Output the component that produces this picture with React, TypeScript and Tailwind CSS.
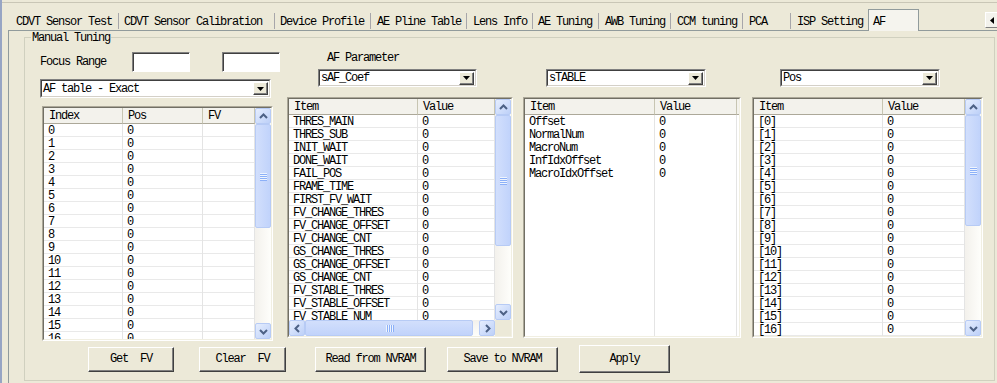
import React from 'react';

type Dir = 'up' | 'down' | 'left' | 'right';

const tabs = [
  { label: 'CDVT Sensor Test', cls: 'w-[109px] pl-[6px] border-r border-r-[#A7A6AA]' },
  { label: 'CDVT Sensor Calibration', cls: 'w-[156px] pl-[5px] border-r border-r-[#A7A6AA]' },
  { label: 'Device Profile', cls: 'w-[96px] pl-[5px] border-r border-r-[#A7A6AA]' },
  { label: 'AE Pline Table', cls: 'w-[96px] pl-[6px] border-r border-r-[#A7A6AA]' },
  { label: 'Lens Info', cls: 'w-[66px] pl-[6px] border-r border-r-[#A7A6AA]' },
  { label: 'AE Tuning', cls: 'w-[66px] pl-[5px] border-r border-r-[#A7A6AA]' },
  { label: 'AWB Tuning', cls: 'w-[72px] pl-[6px] border-r border-r-[#A7A6AA]' },
  { label: 'CCM tuning', cls: 'w-[72px] pl-[6px] border-r border-r-[#A7A6AA]' },
  { label: 'PCA', cls: 'w-[48px] pl-[6px] border-r border-r-[#A7A6AA]' },
  { label: 'ISP Setting', cls: 'w-[77px] pl-[6px]' },
];

const afParams = [
  'THRES_MAIN', 'THRES_SUB', 'INIT_WAIT', 'DONE_WAIT', 'FAIL_POS', 'FRAME_TIME', 'FIRST_FV_WAIT',
  'FV_CHANGE_THRES', 'FV_CHANGE_OFFSET', 'FV_CHANGE_CNT', 'GS_CHANGE_THRES', 'GS_CHANGE_OFFSET',
  'GS_CHANGE_CNT', 'FV_STABLE_THRES', 'FV_STABLE_OFFSET', 'FV_STABLE_NUM',
];
const stable = ['Offset', 'NormalNum', 'MacroNum', 'InfIdxOffset', 'MacroIdxOffset'];
const range = (n: number) => Array.from({ length: n }, (_, i) => i);

const Arrow = ({ dir }: { dir: Dir }) => {
  const d = {
    up: 'M1 6L4.5 2.5L8 6',
    down: 'M1 3L4.5 6.5L8 3',
    left: 'M6 1L2.5 4.5L6 8',
    right: 'M3 1L6.5 4.5L3 8',
  }[dir];
  return (
    <svg width="9" height="9" viewBox="0 0 9 9">
      <path d={d} fill="none" stroke="#4D6185" strokeWidth="2" />
    </svg>
  );
};

const LunaBtn = ({ dir }: { dir: Dir }) => (
  <div className="flex h-[16px] w-[16px] shrink-0 items-center justify-center rounded-[2px] border border-[#B7CBF5] bg-gradient-to-br from-[#E6EEFE] to-[#BDD0F8]">
    <Arrow dir={dir} />
  </div>
);

const Grip = ({ vertical }: { vertical?: boolean }) =>
  vertical ? (
    <div className="flex h-[7px] gap-px">
      {range(4).map((i) => (
        <div key={i} className="h-full w-px bg-[#EEF4FE] shadow-[1px_0_0_#8CB0F8]" />
      ))}
    </div>
  ) : (
    <div className="flex w-[7px] flex-col gap-px">
      {range(4).map((i) => (
        <div key={i} className="h-px w-full bg-[#EEF4FE] shadow-[0_1px_0_#8CB0F8]" />
      ))}
    </div>
  );

const VScroll = ({ thumb }: { thumb: string }) => (
  <div className="flex h-full w-[16px] shrink-0 flex-col bg-gradient-to-r from-[#F3F1EC] to-[#FEFEFB]">
    <LunaBtn dir="up" />
    <div className={'flex w-[16px] items-center justify-center rounded-[2px] border border-[#B7CBF5] bg-gradient-to-r from-[#D2DFFC] to-[#C1D3FB] ' + thumb}>
      <Grip />
    </div>
    <div className="flex-1" />
    <LunaBtn dir="down" />
  </div>
);

const HScroll = () => (
  <div className="flex h-[16px] flex-1 bg-gradient-to-b from-[#F3F1EC] to-[#FEFEFB]">
    <LunaBtn dir="left" />
    <div className="flex h-[16px] w-[168px] items-center justify-center rounded-[2px] border border-[#B7CBF5] bg-gradient-to-b from-[#D2DFFC] to-[#C1D3FB]">
      <Grip vertical />
    </div>
    <div className="flex-1" />
    <LunaBtn dir="right" />
  </div>
);

type Col = { label: string; w: string; cells: string[] };

const ListView = ({
  cls,
  cols,
  thumb,
  hscroll,
  lines = true,
}: {
  cls: string;
  cols: Col[];
  thumb?: string;
  hscroll?: boolean;
  lines?: boolean;
}) => (
  <div className={'border border-b-white border-l-[#ACA899] border-r-white border-t-[#ACA899] ' + cls}>
    <div className="flex h-full w-full flex-col border border-b-[#F1EFE2] border-l-[#716F64] border-r-[#F1EFE2] border-t-[#716F64] bg-white">
      <div className="flex min-h-0 flex-1">
        <div className="flex min-w-0 flex-1 overflow-hidden">
          {cols.map((c) => (
            <div key={c.label} className={'flex shrink-0 flex-col ' + c.w}>
              <div className="h-[16px] shrink-0 border-b border-r border-b-[#ACA899] border-r-[#C7C5B2] bg-[#F3F2EC] pl-[5px] pt-[1px] leading-[14px] whitespace-nowrap">
                {c.label}
              </div>
              <div className="flex-1 border-r border-r-[#E4E4E4]">
                {c.cells.map((t, i) => (
                  <div
                    key={i}
                    className={
                      lines
                        ? 'h-[13px] border-b border-b-[#E9E9E9] pl-[4px] pt-px leading-[12px] whitespace-nowrap'
                        : 'h-[13px] pl-[4px] pt-px leading-[12px] whitespace-nowrap'
                    }
                  >
                    {t}
                  </div>
                ))}
              </div>
            </div>
          ))}
          <div className="flex flex-1 flex-col">
            <div className="h-[16px] border-b border-b-[#ACA899] bg-[#F3F2EC]" />
          </div>
        </div>
        {thumb && <VScroll thumb={thumb} />}
      </div>
      {hscroll && (
        <div className="flex h-[16px] shrink-0">
          <HScroll />
          <div className="h-[16px] w-[16px] bg-[#ECE9D8]" />
        </div>
      )}
    </div>
  </div>
);

const Combo = ({ text, cls }: { text: string; cls: string }) => (
  <div className={'flex border border-b-white border-l-[#808080] border-r-white border-t-[#808080] bg-white ' + cls}>
    <div className="flex flex-1 items-center border border-b-[#D4D0C8] border-l-[#404040] border-r-[#D4D0C8] border-t-[#404040] pl-[1px]">
      <span className="leading-none">{text}</span>
      <div className="mr-px ml-auto flex h-[13px] w-[15px] items-center justify-center border border-b-[#404040] border-l-white border-r-[#404040] border-t-white bg-[#ECE9D8] shadow-[inset_-1px_-1px_0_#808080]">
        <svg width="7" height="4" viewBox="0 0 7 4">
          <path d="M0 0H7L3.5 4Z" fill="#000" />
        </svg>
      </div>
    </div>
  </div>
);

const Edit = () => (
  <div className="h-[20px] w-[58px] border border-b-white border-l-[#808080] border-r-white border-t-[#808080] bg-white shadow-[inset_1px_1px_0_#404040]" />
);

const Btn = ({ label, cls }: { label: string; cls: string }) => (
  <div
    className={
      'flex items-center justify-center whitespace-pre border border-b-[#404040] border-l-white border-r-[#404040] border-t-white bg-[#ECE9D8] shadow-[inset_-1px_-1px_0_#808080] ' +
      cls
    }
  >
    {label}
  </div>
);

export default function App() {
  return (
    <div className="flex h-[383px] w-[997px] overflow-hidden bg-[#ECE9D8] font-['Liberation_Mono',monospace] text-[12px] tracking-[-1.2px] text-black">
      <div className="h-full w-[2px] shrink-0 bg-[#97A5C4]" />
      <div className="flex min-w-0 flex-1 flex-col">
        <div className="h-[3px] shrink-0 border-b border-b-[#C9C6B6]" />
        {/* tab strip */}
        <div className="mt-[6px] flex h-[21px] shrink-0 items-start pl-[8px]">
          {tabs.map((t) => (
            <div key={t.label} className={'mt-[4px] h-[16px] shrink-0 pt-[2px] leading-[14px] whitespace-nowrap ' + t.cls}>
              {t.label}
            </div>
          ))}
          <div className="relative z-10 h-[22px] w-[51px] shrink-0 border border-b-0 border-[#919B9C] bg-[#F5F4EE] pl-[4px] pt-[5px] leading-[14px]">
            AF
          </div>
          <div className="mt-[3px] ml-[66px] flex h-[16px] w-[14px] shrink-0 items-center justify-center border border-b-[#808080] border-l-white border-r-[#808080] border-t-white bg-[#F3F2EC]">
            <svg width="4" height="7" viewBox="0 0 4 7">
              <path d="M4 0V7L0 3.5Z" fill="#000" />
            </svg>
          </div>
        </div>
        {/* tab page */}
        <div className="ml-[6px] flex-1 border-l border-t border-[#919B9C] pl-[15px] pt-[6px]">
          <div className="relative h-[344px] w-[971px] border border-[#D0D0BF]">
            <div className="absolute -top-[6px] left-[6px] bg-[#ECE9D8] px-px leading-[12px]">Manual Tuning</div>
            <div className="flex items-start">
              {/* column 1 */}
              <div className="ml-[15px] flex w-[242px] shrink-0 flex-col">
                <div className="mt-[14px] flex h-[20px] items-center">
                  <div className="w-[92px]">Focus Range</div>
                  <Edit />
                  <div className="w-[32px]" />
                  <Edit />
                </div>
                <Combo text="AF table - Exact" cls="mt-[7px] h-[19px] w-[231px]" />
                <ListView
                  cls="mt-[8px] ml-[2px] h-[235px] w-[231px]"
                  thumb="h-[104px]"
                  cols={[
                    { label: 'Index', w: 'w-[79px]', cells: range(17).map(String) },
                    { label: 'Pos', w: 'w-[80px]', cells: range(17).map(() => '0') },
                    { label: 'FV', w: 'w-[52px]', cells: range(17).map(() => '') },
                  ]}
                />
              </div>
              {/* column 2 */}
              <div className="ml-[5px] flex w-[226px] shrink-0 flex-col">
                <div className="mt-[14px] h-[13px] pl-[40px] leading-[13px]">AF Parameter</div>
                <Combo text="sAF_Coef" cls="mt-[4px] ml-[31px] h-[18px] w-[159px]" />
                <ListView
                  cls="mt-[10px] h-[241px] w-[226px]"
                  thumb="h-[131px]"
                  hscroll
                  cols={[
                    { label: 'Item', w: 'w-[129px]', cells: afParams },
                    { label: 'Value', w: 'w-[77px]', cells: afParams.map(() => '0') },
                  ]}
                />
              </div>
              {/* column 3 */}
              <div className="ml-[10px] flex w-[218px] shrink-0 flex-col">
                <Combo text="sTABLE" cls="mt-[31px] ml-[23px] h-[18px] w-[160px]" />
                <ListView
                  cls="mt-[10px] h-[241px] w-[218px]"
                  lines={false}
                  cols={[
                    { label: 'Item', w: 'w-[130px]', cells: stable },
                    { label: 'Value', w: 'w-[82px]', cells: stable.map(() => '0') },
                  ]}
                />
              </div>
              {/* column 4 */}
              <div className="ml-[11px] flex w-[231px] shrink-0 flex-col">
                <Combo text="Pos" cls="mt-[31px] ml-[28px] h-[18px] w-[160px]" />
                <ListView
                  cls="mt-[10px] h-[241px] w-[231px]"
                  thumb="h-[111px]"
                  cols={[
                    { label: 'Item', w: 'w-[129px]', cells: range(17).map((i) => `[${i}]`) },
                    { label: 'Value', w: 'w-[82px]', cells: range(17).map(() => '0') },
                  ]}
                />
              </div>
            </div>
            {/* buttons */}
            <div className="mt-[4px] flex h-[28px] items-center">
              <Btn label="Get  FV" cls="ml-[63px] h-[25px] w-[86px]" />
              <Btn label="Clear  FV" cls="ml-[25px] h-[25px] w-[87px]" />
              <Btn label="Read from NVRAM" cls="ml-[29px] h-[25px] w-[111px]" />
              <Btn label="Save to NVRAM" cls="ml-[21px] h-[25px] w-[111px]" />
              <Btn label="Apply" cls="ml-[21px] h-[28px] w-[91px]" />
            </div>
          </div>
        </div>
      </div>
    </div>
  );
}
